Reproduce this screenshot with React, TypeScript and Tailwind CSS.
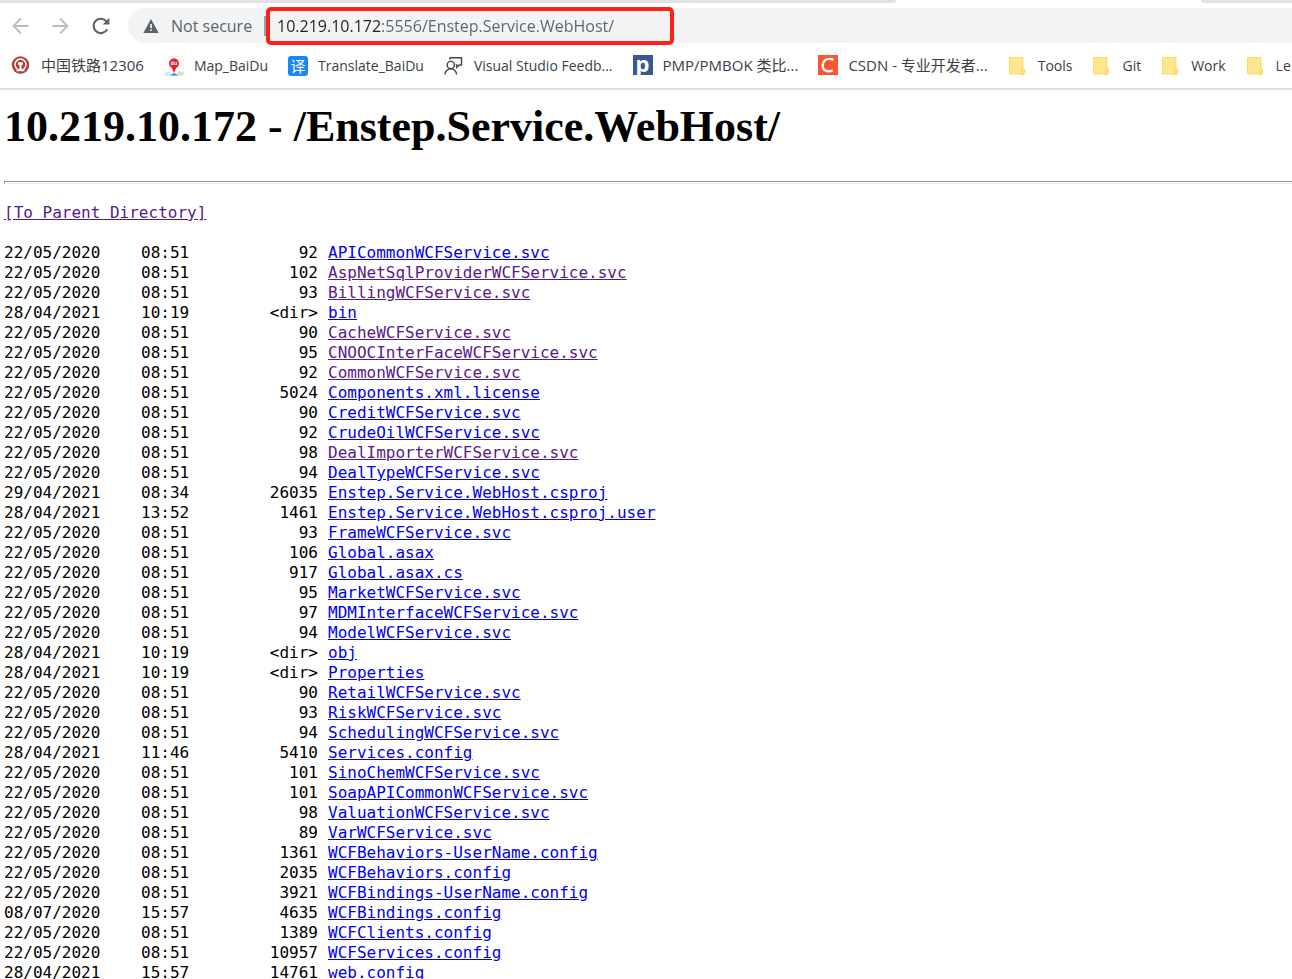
import type { ReactNode } from 'react';

interface Bookmark {
  label: string;
  icon: ReactNode;
  cjk?: boolean;
}

interface Entry {
  date: string;
  time: string;
  size: string;
  name: string;
  visited?: boolean;
}

function BackIcon() {
  return (
    <svg className="size-[18px]" viewBox="0 0 18 18" fill="none" stroke="currentColor" strokeWidth={1.8}>
      <path d="M16.5 9H2M9 1.5L1.5 9L9 16.5" />
    </svg>
  );
}

function ForwardIcon() {
  return (
    <svg className="size-[18px]" viewBox="0 0 18 18" fill="none" stroke="currentColor" strokeWidth={1.8}>
      <path d="M0.5 9H15M8 1.5L15.500 9L8 16.5" />
    </svg>
  );
}

function ReloadIcon() {
  return (
    <svg className="size-[18px]" viewBox="0 0 18 18" fill="none">
      <path d="M15.2 12.2A7.2 7.2 0 1 1 14.6 4.6" stroke="currentColor" strokeWidth={2.1} />
      <path d="M17.4 0.8V7.6H10.6Z" fill="currentColor" />
    </svg>
  );
}

function WarningIcon() {
  return (
    <svg className="size-4 shrink-0" viewBox="0 0 16 16">
      <path d="M8 1L15.7 15H0.3Z" fill="#5f6368" />
      <path d="M7.2 6h1.7v4.3H7.2zM7.2 11.4h1.7v1.7H7.2z" fill="#f1f3f4" />
    </svg>
  );
}

function RailwayIcon() {
  return (
    <svg className="size-5" viewBox="0 0 20 20">
      <circle cx="9.5" cy="10" r="8.7" fill="#b0413e" />
      <path
        d="M6.500 14.200A5.500 5.500 0 1 1 12.500 14.200"
        fill="none"
        stroke="#fff"
        strokeWidth="1.5"
      />
      <path d="M7 7.300h5v2.300l-1.500 0.700v3.400l3 1.100v1.400H5.500v-1.400l3-1.100v-3.400L7 9.600z" fill="#fff" />
    </svg>
  );
}

function MapIcon() {
  return (
    <svg className="size-5" viewBox="0 0 20 20">
      <rect x="0.5" y="0.5" width="19" height="19" rx="2" fill="#fff" stroke="#f3f3f3" />
      <path d="M0.5 17l4.500-2 3 4.500H0.500z" fill="#cfe9f7" />
      <path d="M19.500 16l-5-1-3 4.500h8z" fill="#cfe8b0" />
      <path d="M6 19.500l4-2.500 4 2.500z" fill="#2d7de0" />
      <path d="M10 17L7.800 11.800A5 5 0 1 1 12.200 11.800Z" fill="#f0202a" />
      <text x="10" y="8.8" textAnchor="middle" fill="#fff" className="font-['Open_Sans',sans-serif] text-[5px] font-bold">
        du
      </text>
    </svg>
  );
}

function TranslateIcon() {
  return (
    <span className="flex size-5 items-center justify-center rounded-[3px] bg-[#1b87f5] font-['Noto_Sans_CJK_SC',sans-serif] text-[15px] leading-5 text-white">
      译
    </span>
  );
}

function FeedbackIcon() {
  return (
    <svg className="size-5" viewBox="0 0 20 20" fill="none" stroke="#444" strokeWidth={1.4}>
      <circle cx="6.800" cy="9" r="3.600" />
      <path d="M1 18.500a5.800 5.800 0 0 1 11.600 0" />
      <path d="M6 3.500V1.700h11.500v7.300h-2.300l-2.400 2.300V9h-1" />
    </svg>
  );
}

function PmpIcon() {
  return (
    <span className="flex size-5 items-center justify-center bg-[#3a5795] pb-1 font-['Open_Sans',sans-serif] text-[22px] leading-4 font-bold text-white">
      p
    </span>
  );
}

function CsdnIcon() {
  return (
    <svg className="size-5" viewBox="0 0 20 20">
      <path d="M0 0h20v20H0z" fill="#fc5531" />
      <path
        d="M15.500 5A6 6 0 0 0 11.500 3.900C7.500 3.900 4.900 6.800 4.600 10.500C4.400 14 6.800 16.300 10.400 16.300A8 8 0 0 0 14.800 15.300"
        fill="none"
        stroke="#fff"
        strokeWidth="2.400"
      />
    </svg>
  );
}

function FolderIcon() {
  return (
    <svg className="size-5" viewBox="0 0 20 20">
      <path d="M1.500 1.500h13.500v16.500H1.500z" fill="#ffe68f" stroke="#fbdb66" />
      <path d="M13.500 18.500v-4.500c0-1.500 3-1.500 3 0v3.500l-1 1z" fill="#ffe68f" stroke="#f8d352" />
    </svg>
  );
}

const BOOKMARKS: Bookmark[] = [
  { label: '中国铁路12306', icon: <RailwayIcon />, cjk: true },
  { label: 'Map_BaiDu', icon: <MapIcon /> },
  { label: 'Translate_BaiDu', icon: <TranslateIcon /> },
  { label: 'Visual Studio Feedb...', icon: <FeedbackIcon /> },
  { label: 'PMP/PMBOK 类比...', icon: <PmpIcon />, cjk: true },
  { label: 'CSDN - 专业开发者...', icon: <CsdnIcon />, cjk: true },
  { label: 'Tools', icon: <FolderIcon /> },
  { label: 'Git', icon: <FolderIcon /> },
  { label: 'Work', icon: <FolderIcon /> },
  { label: 'Le', icon: <FolderIcon /> },
];

const ENTRIES: Entry[] = [
  { date: '22/05/2020', time: '08:51', size: '92', name: 'APICommonWCFService.svc' },
  { date: '22/05/2020', time: '08:51', size: '102', name: 'AspNetSqlProviderWCFService.svc', visited: true },
  { date: '22/05/2020', time: '08:51', size: '93', name: 'BillingWCFService.svc', visited: true },
  { date: '28/04/2021', time: '10:19', size: '<dir>', name: 'bin' },
  { date: '22/05/2020', time: '08:51', size: '90', name: 'CacheWCFService.svc', visited: true },
  { date: '22/05/2020', time: '08:51', size: '95', name: 'CNOOCInterFaceWCFService.svc', visited: true },
  { date: '22/05/2020', time: '08:51', size: '92', name: 'CommonWCFService.svc', visited: true },
  { date: '22/05/2020', time: '08:51', size: '5024', name: 'Components.xml.license' },
  { date: '22/05/2020', time: '08:51', size: '90', name: 'CreditWCFService.svc' },
  { date: '22/05/2020', time: '08:51', size: '92', name: 'CrudeOilWCFService.svc' },
  { date: '22/05/2020', time: '08:51', size: '98', name: 'DealImporterWCFService.svc', visited: true },
  { date: '22/05/2020', time: '08:51', size: '94', name: 'DealTypeWCFService.svc' },
  { date: '29/04/2021', time: '08:34', size: '26035', name: 'Enstep.Service.WebHost.csproj' },
  { date: '28/04/2021', time: '13:52', size: '1461', name: 'Enstep.Service.WebHost.csproj.user' },
  { date: '22/05/2020', time: '08:51', size: '93', name: 'FrameWCFService.svc' },
  { date: '22/05/2020', time: '08:51', size: '106', name: 'Global.asax' },
  { date: '22/05/2020', time: '08:51', size: '917', name: 'Global.asax.cs' },
  { date: '22/05/2020', time: '08:51', size: '95', name: 'MarketWCFService.svc' },
  { date: '22/05/2020', time: '08:51', size: '97', name: 'MDMInterfaceWCFService.svc' },
  { date: '22/05/2020', time: '08:51', size: '94', name: 'ModelWCFService.svc' },
  { date: '28/04/2021', time: '10:19', size: '<dir>', name: 'obj' },
  { date: '28/04/2021', time: '10:19', size: '<dir>', name: 'Properties' },
  { date: '22/05/2020', time: '08:51', size: '90', name: 'RetailWCFService.svc' },
  { date: '22/05/2020', time: '08:51', size: '93', name: 'RiskWCFService.svc' },
  { date: '22/05/2020', time: '08:51', size: '94', name: 'SchedulingWCFService.svc' },
  { date: '28/04/2021', time: '11:46', size: '5410', name: 'Services.config' },
  { date: '22/05/2020', time: '08:51', size: '101', name: 'SinoChemWCFService.svc' },
  { date: '22/05/2020', time: '08:51', size: '101', name: 'SoapAPICommonWCFService.svc' },
  { date: '22/05/2020', time: '08:51', size: '98', name: 'ValuationWCFService.svc' },
  { date: '22/05/2020', time: '08:51', size: '89', name: 'VarWCFService.svc' },
  { date: '22/05/2020', time: '08:51', size: '1361', name: 'WCFBehaviors-UserName.config' },
  { date: '22/05/2020', time: '08:51', size: '2035', name: 'WCFBehaviors.config' },
  { date: '22/05/2020', time: '08:51', size: '3921', name: 'WCFBindings-UserName.config' },
  { date: '08/07/2020', time: '15:57', size: '4635', name: 'WCFBindings.config' },
  { date: '22/05/2020', time: '08:51', size: '1389', name: 'WCFClients.config' },
  { date: '22/05/2020', time: '08:51', size: '10957', name: 'WCFServices.config' },
  { date: '28/04/2021', time: '15:57', size: '14761', name: 'web.config' },
];

function BrowserBar() {
  return (
    <header className="border-b-2 border-[#dadce0] font-['Open_Sans','Noto_Sans_CJK_SC',sans-serif]">
      <div className="flex h-[3px] justify-between">
        <div className="w-[896px] rounded-br-full bg-[#dee1e6]" />
        <div className="w-[91px] rounded-bl-full bg-[#dee1e6]" />
      </div>
      <div className="flex items-center pt-[5px] pl-3">
        <button type="button" aria-label="Back" className="text-[#babcbe]">
          <BackIcon />
        </button>
        <button type="button" aria-label="Forward" className="ml-[22px] text-[#babcbe]">
          <ForwardIcon />
        </button>
        <button type="button" aria-label="Reload" className="ml-[22px] text-[#5f6368]">
          <ReloadIcon />
        </button>
        <div className="ml-[18px] flex h-[35px] flex-1 items-center rounded-l-full bg-[#f1f3f4] pl-[15px]">
          <WarningIcon />
          <span className="ml-3 w-[93px] text-base whitespace-nowrap text-[#5f6368]">Not secure</span>
          <span className="h-5 w-0.5 bg-[#9aa0a6]" />
          {/* host part is darker than the port and path */}
          <input
            type="text"
            aria-label="Address"
            defaultValue="10.219.10.172:5556/Enstep.Service.WebHost/"
            className="h-[38px] w-[408px] rounded-[5px] border-4 border-[#ff2116] bg-linear-to-r from-[#202124] from-[110px] to-[#5f6368] to-[110px] bg-clip-text px-[7px] text-base text-transparent outline-none"
          />
        </div>
      </div>
      <nav className="flex h-[45px] items-center gap-5 overflow-hidden pl-[11px] text-sm whitespace-nowrap text-[#3c4043]">
        {BOOKMARKS.map((b) => (
          <a key={b.label} href="#" className="flex shrink-0 items-center gap-2.5">
            {b.icon}
            <span className={b.cjk ? 'text-[15px]' : undefined}>{b.label}</span>
          </a>
        ))}
      </nav>
    </header>
  );
}

function Listing() {
  return (
    <table className="mt-5">
      <tbody>
        {ENTRIES.map((e) => (
          <tr key={e.name}>
            <td className="w-[137px] p-0">{e.date}</td>
            <td className="w-[90px] p-0">{e.time}</td>
            <td className="w-[87px] p-0 text-right">{e.size}</td>
            <td className="p-0 pl-2.5">
              <a href="#" className={e.visited ? 'text-[#551a8b] underline' : 'text-[#0000ee] underline'}>
                {e.name}
              </a>
            </td>
          </tr>
        ))}
      </tbody>
    </table>
  );
}

export default function App() {
  return (
    <div className="overflow-hidden bg-white text-black">
      <BrowserBar />
      <main className="pl-1">
        <h1 className="pt-3 font-['Liberation_Serif',serif] text-[44px] leading-[50px] font-bold">
          10.219.10.172 - /Enstep.Service.WebHost/
        </h1>
        <hr className="mt-[29px] h-[3px] border-t border-b border-l border-t-[#9a9a9a] border-b-[#eeeeee] border-l-[#9a9a9a]" />
        <div className="mt-[19px] font-['DejaVu_Sans_Mono',monospace] text-base leading-5">
          <a href="#" className="text-[#551a8b] underline">
            [To Parent Directory]
          </a>
          <Listing />
        </div>
      </main>
    </div>
  );
}
